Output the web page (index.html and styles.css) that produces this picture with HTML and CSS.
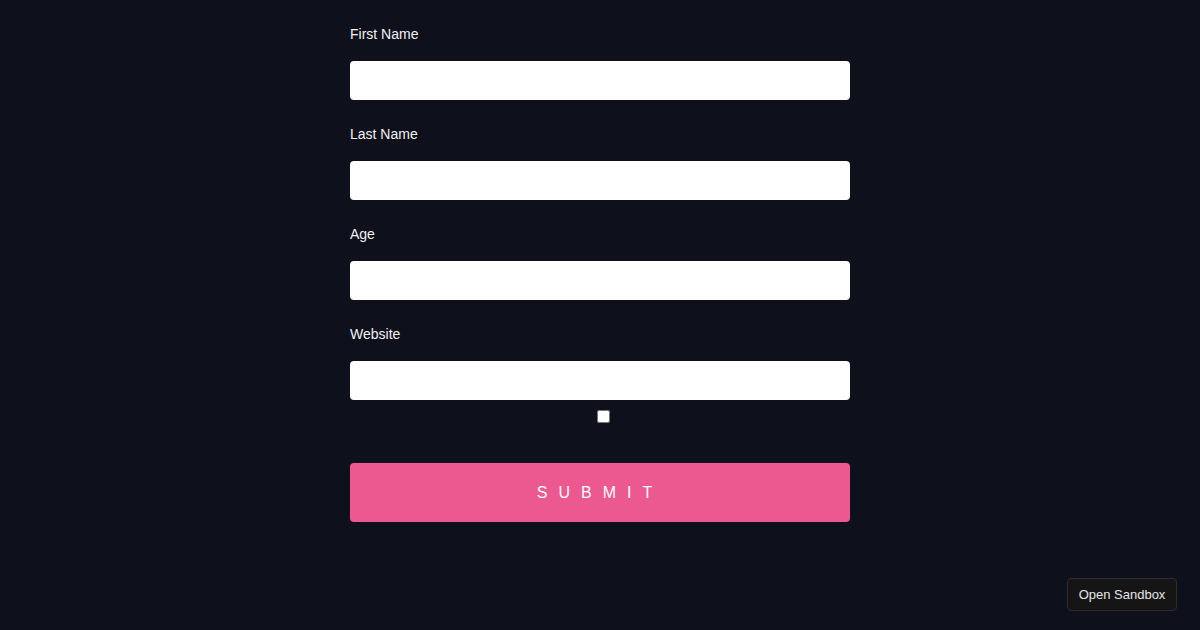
FILE: index.html
```html
<!DOCTYPE html>
<html>
<head>
<meta charset="utf-8">
<link rel="stylesheet" href="styles.css">
</head>
<body>
<form class="form">
  <div class="field">
    <label class="label">First Name</label>
    <input class="input" type="text">
  </div>
  <div class="field">
    <label class="label">Last Name</label>
    <input class="input" type="text">
  </div>
  <div class="field">
    <label class="label">Age</label>
    <input class="input" type="text">
  </div>
  <div class="field">
    <label class="label">Website</label>
    <input class="input" type="text">
  </div>
  <div class="check-row"><input class="check" type="checkbox"></div>
  <button class="submit" type="button">SUBMIT</button>
</form>
<button class="sandbox" type="button">Open Sandbox</button>
</body>
</html>
```
FILE: styles.css
```css
html, body {
  margin: 0;
  padding: 0;
  background: #0e101b;
  height: 100%;
}
body {
  font-family: "Liberation Sans", Arial, sans-serif;
  color: #fff;
}
.form {
  width: 500px;
  margin: 0 auto;
  padding-top: 26px;
  display: flex;
  flex-direction: column;
}
.field {
  display: flex;
  flex-direction: column;
}
.field + .field {
  margin-top: 26px;
}
.label {
  font-size: 14px;
  line-height: 16px;
  color: #f2f2f2;
  margin-bottom: 19px;
}
.input {
  box-sizing: border-box;
  height: 39px;
  width: 100%;
  border: none;
  border-radius: 4px;
  background: #fff;
  margin: 0;
  padding: 0 10px;
}
.check-row {
  display: flex;
  justify-content: center;
  padding-top: 10px;
}
.check {
  width: 13px;
  height: 13px;
  margin: 0 0 0 7px;
}
.submit {
  margin-top: 40px;
  height: 59px;
  width: 100%;
  border: none;
  border-radius: 4px;
  background: #ec5990;
  color: #fff;
  font-family: "Liberation Sans", Arial, sans-serif;
  font-size: 16px;
  letter-spacing: 11px;
  padding: 0;
  text-transform: uppercase;
}
.sandbox {
  position: fixed;
  right: 23px;
  bottom: 19px;
  width: 110px;
  height: 33px;
  box-sizing: border-box;
  background: #151515;
  color: #e6e6e6;
  border: 1px solid #2c2c2c;
  border-radius: 4px;
  font-family: "Liberation Sans", Arial, sans-serif;
  font-size: 13px;
  padding: 0;
}
```
